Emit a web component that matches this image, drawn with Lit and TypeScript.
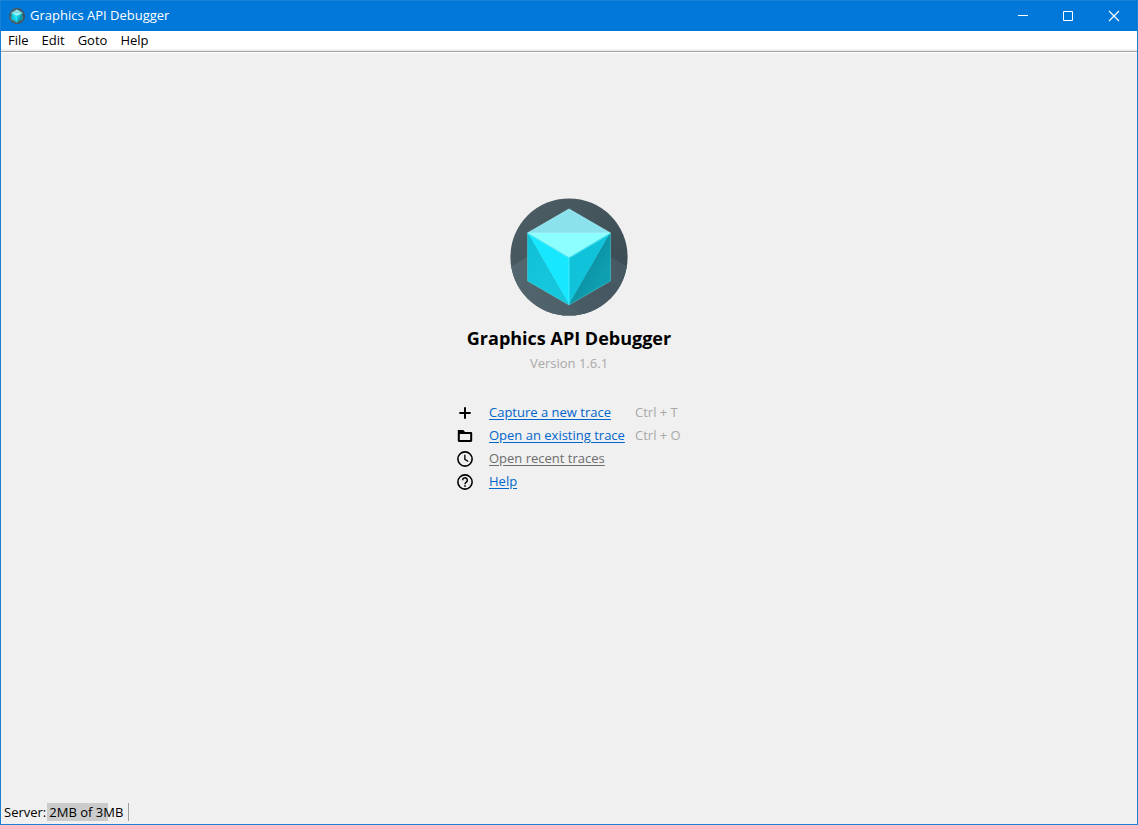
import { LitElement, html, css, svg, nothing } from "lit";
import { customElement, property } from "lit/decorators.js";

const icons = {
  add: svg`<path d="M10.500 3.500h3v7H20.500v3h-7v7h-3v-7h-7v-3h7z"/>`,
  folder: svg`<path fill-rule="evenodd" d="M1.500 3h8l2.500 3h9c1 0 1.800.8 1.800 1.800v11.400c0 1-.8 1.800-1.800 1.800H3c-1 0-1.800-.8-1.800-1.800V3zM4.200 9v9h15.600V9z"/>`,
  clock: svg`<g fill="none" stroke="#000" stroke-width="2.400"><circle cx="12" cy="12" r="10.700"/><path d="M11.800 5.500v7l5 3.200" stroke-width="2"/></g>`,
  help: svg`<g fill="none" stroke="#000" stroke-width="2.400"><circle cx="12" cy="12" r="10.700"/><path d="M8.500 9.300a3.500 3.500 0 1 1 5.900 2.500c-1.400 1.300-2.400 1.700-2.400 3.700" stroke-width="2.200"/></g><path d="M10.800 16.800h2.400v2.400h-2.400z"/>`,
};

type IconName = keyof typeof icons;

const menus = ["File", "Edit", "Goto", "Help"];

const actions: { icon: IconName; label: string; keys?: string; disabled?: boolean }[] = [
  { icon: "add", label: "Capture a new trace", keys: "Ctrl + T" },
  { icon: "folder", label: "Open an existing trace", keys: "Ctrl + O" },
  { icon: "clock", label: "Open recent traces", disabled: true },
  { icon: "help", label: "Help" },
];

@customElement("gem-logo")
class GemLogo extends LitElement {
  static styles = css`
    :host { display: block; }
    svg { display: block; width: 100%; height: 100%; }
  `;

  render() {
    return html`<svg viewBox="0 0 118 118" aria-hidden="true">
      <defs>
        <linearGradient id="disc" x1="0" y1="0" x2="1" y2="1">
          <stop offset="0" stop-color="#4f5f66" />
          <stop offset="1" stop-color="#37474f" />
        </linearGradient>
        <linearGradient id="floor" x1="0" y1="0" x2="1" y2="0">
          <stop offset="0" stop-color="#54676f" />
          <stop offset="1" stop-color="#465861" />
        </linearGradient>
        <linearGradient id="shade" x1="0" y1="0" x2="1" y2="1">
          <stop offset="0.2" stop-color="#0a8797" />
          <stop offset="0.7" stop-color="#0e9fb0" />
        </linearGradient>
        <linearGradient id="side" x1="0" y1="0" x2="0.6" y2="1">
          <stop offset="0" stop-color="#10bfd6" />
          <stop offset="1" stop-color="#16c8de" />
        </linearGradient>
        <clipPath id="round"><circle cx="59" cy="59" r="58.600" /></clipPath>
      </defs>
      <g clip-path="url(#round)">
        <path fill="url(#disc)" d="M0 0h118v118H0z" />
        <path fill="url(#floor)" d="M0 69l59-34 59 34v49H0z" />
        <path fill="#3c4d55" opacity=".15" d="M59 107l41-24 18 11v24H78z" />
      </g>
      <path fill="#8be1ec" d="M59 11l41.500 24h-83z" />
      <path fill="url(#side)" d="M17.500 35L59 107 17.500 83z" />
      <path fill="#17e8ff" d="M17.500 35L59 59.500V107z" />
      <path fill="#10c2da" d="M100.500 35L59 59.500V107z" />
      <path fill="url(#shade)" d="M100.500 35v48L59 107z" />
      <path fill="#8cffff" d="M17.500 35h83L59 59.500z" />
      <path fill="none" stroke="#a5f8ff" stroke-width=".7" d="M17.500 35h83M17.500 35L59 11l41.500 24" />
      <path fill="none" stroke="#48efff" stroke-width=".9" d="M17.500 35.500L59 60l41.500-24.500M59 60v47" />
      <path fill="none" stroke="#5ce5f2" stroke-width=".4" d="M17.500 35v48L59 107l41.500-24V35" />
    </svg>`;
  }
}

@customElement("memory-gauge")
class MemoryGauge extends LitElement {
  @property({ type: Number }) used = 0;
  @property({ type: Number }) total = 1;
  @property({ type: Number }) fill = 0;

  static styles = css`
    :host { display: block; position: relative; padding: 0 1px 0 2px; line-height: 18px; }
    .fill { position: absolute; inset: 0 auto 0 0; background: #cbcbcb; }
    .text { position: relative; }
  `;

  render() {
    return html`<div class="fill" style="width:${this.fill}%"></div>
      <span class="text">${this.used}MB of ${this.total}MB</span>`;
  }
}

@customElement("app-root")
class AppRoot extends LitElement {
  static styles = css`
    :host {
      display: flex;
      flex-direction: column;
      box-sizing: border-box;
      min-height: 100vh;
      border: 1px solid #1a80d3;
      background: #f0f0f0;
      color: #000;
      font: 13px/18px "Open Sans", "Noto Sans", sans-serif;
    }
    button { font: inherit; color: inherit; border: 0; margin: 0; padding: 0; background: none; }
    .titlebar { display: flex; align-items: center; height: 30px; background: #0078d9; color: #fff; }
    .titlebar gem-logo { width: 16px; height: 16px; margin: 0 5px 0 8px; }
    .title { flex: 1; line-height: 20px; padding-bottom: 2px; }
    .control { display: flex; align-items: center; justify-content: center; width: 46px; height: 30px; }
    .control svg { display: block; width: 12px; height: 12px; fill: none; stroke: #fff; }
    .menubar { display: flex; height: 18px; gap: 13px; padding: 0 7px; background: #fff; border-bottom: 2px solid #f0f0f0; }
    .menubar button { line-height: 18px; height: 18px; }
    main {
      flex: 1;
      display: flex;
      flex-direction: column;
      align-items: center;
      padding-top: 146px;
      border-top: 1px solid #a0a0a0;
      box-shadow: inset 0 1px #fff;
    }
    main gem-logo { width: 118px; height: 118px; }
    h1 { margin: 10px 0 0; font-size: 18px; line-height: 24px; font-weight: 700; }
    .version { margin: 4px 0 0; color: #a9a9a9; }
    .actions { display: grid; grid-template-columns: 32px 146px 46px; grid-auto-rows: 23px; align-items: center; margin: 29px 0 0; }
    .actions svg { display: block; width: 16px; height: 16px; }
    .actions span { padding-bottom: 2px; }
    a { color: #0066cc; text-decoration: underline; text-underline-offset: 2px; white-space: nowrap; }
    a.disabled { color: #6d6d6d; }
    .keys { color: #a9a9a9; white-space: nowrap; }
    footer { display: flex; align-items: center; padding: 0 3px 3px; }
    .server { display: flex; align-items: center; gap: 1px; padding-right: 4px; border-right: 1px solid #a0a0a0; }
  `;

  render() {
    return html`
      <header class="titlebar">
        <gem-logo></gem-logo>
        <span class="title">Graphics API Debugger</span>
        <button class="control" aria-label="Minimize"><svg viewBox="0 0 12 12"><path d="M2 5.500h10" /></svg></button>
        <button class="control" aria-label="Maximize"><svg viewBox="0 0 12 12"><path d="M1.500 1.500h9v9h-9z" /></svg></button>
        <button class="control" aria-label="Close"><svg viewBox="0 0 12 12"><path d="M1 1l10 10M11 1L1 11" stroke-width="1.200" /></svg></button>
      </header>
      <nav class="menubar">${menus.map((m) => html`<button>${m}</button>`)}</nav>
      <main>
        <gem-logo></gem-logo>
        <h1>Graphics API Debugger</h1>
        <p class="version">Version 1.6.1</p>
        <div class="actions">
          ${actions.map(
            (a) => html`
              <svg viewBox="0 0 24 24" aria-hidden="true">${icons[a.icon]}</svg>
              <span><a class=${a.disabled ? "disabled" : "link"} href="#" aria-disabled=${a.disabled ? "true" : nothing}>${a.label}</a></span>
              <span class="keys">${a.keys ?? nothing}</span>
            `
          )}
        </div>
      </main>
      <footer>
        <div class="server">
          <span>Server:</span>
          <memory-gauge used="2" total="3" fill="79"></memory-gauge>
        </div>
      </footer>
    `;
  }
}
